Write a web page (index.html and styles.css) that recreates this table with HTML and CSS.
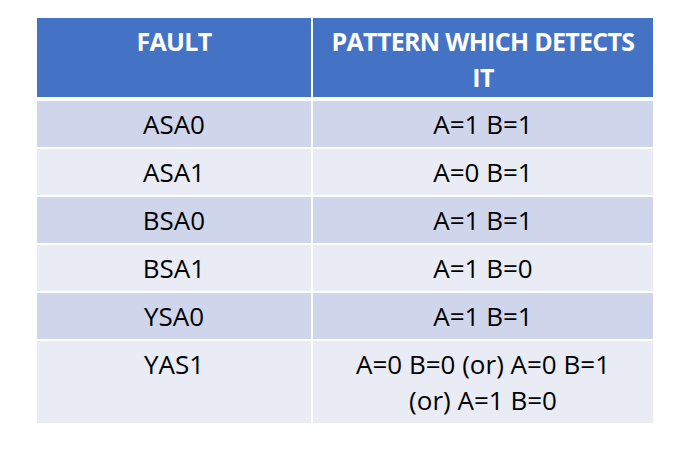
FILE: index.html
```html
<!DOCTYPE html>
<html lang="en">
<head>
<meta charset="utf-8">
<title>Fault table</title>
<link rel="stylesheet" href="styles.css">
</head>
<body>
<div class="page">
  <div class="table">
    <div class="cell head">FAULT</div>
    <div class="cell head">PATTERN WHICH DETECTS IT</div>

    <div class="cell band1">ASA0</div>
    <div class="cell band1 val">A=1 B=1</div>

    <div class="cell band2">ASA1</div>
    <div class="cell band2 val">A=0 B=1</div>

    <div class="cell band1">BSA0</div>
    <div class="cell band1 val">A=1 B=1</div>

    <div class="cell band2">BSA1</div>
    <div class="cell band2 val">A=1 B=0</div>

    <div class="cell band1">YSA0</div>
    <div class="cell band1 val">A=1 B=1</div>

    <div class="cell band2">YAS1</div>
    <div class="cell band2 val">A=0 B=0 (or) A=0 B=1 (or) A=1 B=0</div>
  </div>
</div>
</body>
</html>
```

FILE: styles.css
```css
html, body {
  margin: 0;
  padding: 0;
  background: #ffffff;
}

.page {
  padding: 18px 0 0 37px;
}

.table {
  display: grid;
  grid-template-columns: 274px 340px;
  column-gap: 2px;
  row-gap: 2px;
  width: 616px;
  font-family: "Open Sans", "Liberation Sans", sans-serif;
  font-size: 26px;
  line-height: 36px;
  color: #000000;
}

.cell {
  text-align: center;
  padding: 5px 8px 5px;
}

.head {
  background: #4472c4;
  color: #ffffff;
  font-size: 25px;
  font-weight: 700;
  letter-spacing: -0.7px;
  padding: 5px 10px 2px;
  margin-bottom: 2px;
}

.band1 {
  background: #cfd5ea;
}

.band2 {
  background: #e9ebf5;
}

.val {
  padding-left: 26px;
  padding-right: 26px;
}
```
